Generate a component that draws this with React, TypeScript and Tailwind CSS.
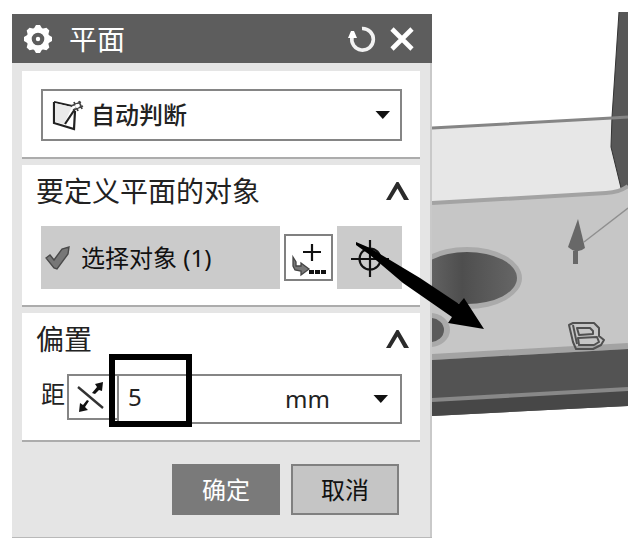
import type { ReactNode } from 'react'

const GearIcon = () => (
  <svg viewBox="0 0 30 30" className="h-[30px] w-[30px] shrink-0" aria-hidden="true">
    <g fill="#fff">
      {[0, 45, 90, 135, 180, 225, 270, 315].map((angle) => (
        <path key={angle} d="M10 6 L13 1 H17 L20 6 Z" transform={`rotate(${angle} 15 15)`} />
      ))}
    </g>
    <circle cx="15" cy="15" r="8.8" fill="none" stroke="#fff" strokeWidth="5" />
    <circle cx="15" cy="15" r="2.2" fill="#fff" />
  </svg>
)

const ResetIcon = () => (
  <svg viewBox="0 0 28 28" className="h-7 w-7" aria-hidden="true">
    <path d="M14 3.5 A10.8 10.8 0 1 1 4 12" fill="none" stroke="#f2f2f2" strokeWidth="3.6" />
    <path d="M0 13 L3 6 L6 6 L9 13 Z" fill="#fff" />
  </svg>
)

const CloseIcon = () => (
  <svg viewBox="0 0 24 24" className="h-6 w-6" aria-hidden="true">
    <path d="M2 2 L22 22 M22 2 L2 22" stroke="#fff" strokeWidth="4.6" />
  </svg>
)

const PlaneIcon = () => (
  <svg viewBox="0 0 32 32" className="h-8 w-8" aria-hidden="true">
    <path d="M2 3 L20 7 M23 12 L22 30 L2 24 L2 3" fill="none" stroke="#222" strokeWidth="2.2" />
    <path d="M3 4 L20 8 L12 25 L3 23 Z" fill="#eaeaea" />
    <path d="M13 25 L23 10" stroke="#222" strokeWidth="2.2" />
    <path d="M19 7 L29 3 M21 11 L31 7 M22 3 L26 12 M27 2 L30 10" stroke="#444" strokeWidth="1.8" />
    <circle cx="25" cy="7" r="2" fill="#fff" />
  </svg>
)

const CheckIcon = () => (
  <svg viewBox="0 0 26 26" className="h-[26px] w-[26px]" aria-hidden="true">
    <path d="M1 13 L5 10 L9 15 L17 4 L24 2 L23 9 L12 24 L9 23 Z" fill="#777" stroke="#4a4a4a" strokeWidth="1.4" />
  </svg>
)

const ChevronUp = () => (
  <svg viewBox="0 0 24 20" className="h-5 w-6" aria-hidden="true">
    <path d="M0 19 L10.5 1 H12.5 L23 19 H18 L11.5 7.5 L4.5 19 Z" fill="#2b2b2b" />
  </svg>
)

const Caret = () => (
  <svg viewBox="0 0 16 9" className="pointer-events-none absolute right-[11px] top-1/2 h-[9px] w-4 -translate-y-1/2" aria-hidden="true">
    <path d="M0.5 0.5 H15 L7.8 8.5 Z" fill="#111" />
  </svg>
)

const AddPointIcon = () => (
  <svg viewBox="0 0 44 42" className="h-[42px] w-11" aria-hidden="true">
    <path d="M25 7 V24 M16 15 H34" stroke="#111" strokeWidth="2.2" />
    <path d="M6 20 L9 25 L9 29 L14 29 V26 L22 32 L14 38 V34 L8 33 L6 29 Z" fill="#777" stroke="#444" strokeWidth="1.3" />
    <path d="M22 33 H27 V37 H22 Z M28 33 H33 V37 H28 Z M34 33 H39 V37 H34 Z" fill="#111" />
  </svg>
)

const CrosshairIcon = () => (
  <svg viewBox="0 0 40 40" className="h-10 w-10" aria-hidden="true">
    <circle cx="20" cy="21" r="10.5" fill="none" stroke="#111" strokeWidth="2.2" />
    <path d="M20 2 V39 M1 21 H39" stroke="#111" strokeWidth="2.2" />
  </svg>
)

const ReverseIcon = () => (
  <svg viewBox="0 0 32 32" className="h-8 w-8" aria-hidden="true">
    <path d="M4 6 L29 27" stroke="#333" strokeWidth="2.4" />
    <path d="M29 1 L28 10 L25 9 L21 13 L18 12 L23 6 L21 3 Z" fill="#111" />
    <path d="M5 31 L6 22 L9 24 L13 19 L15 20 L11 26 L14 29 Z" fill="#111" />
  </svg>
)

// Pointer from the pick button towards the target face
const PointerArrow = () => (
  <svg viewBox="356 241 130 90" className="pointer-events-none absolute left-[19px] top-[15px] z-10 h-[90px] w-[130px] max-w-none" aria-hidden="true">
    <path d="M356 242 L370 248 L420 278 L459 304 L464 298 L484 329 L448 323 L452 317 L403 283 L370 255 L356 245 Z" fill="#000" />
  </svg>
)

const ModelView = () => (
  <svg viewBox="432 12 196 406" className="block w-full" role="img" aria-label="3D">
    <defs>
      <linearGradient id="hole" x1="0" x2="1">
        <stop offset="0" stopColor="#6b6b6b" />
        <stop offset="0.45" stopColor="#4e4e4e" />
        <stop offset="1" stopColor="#666" />
      </linearGradient>
    </defs>
    <path d="M432 128 L628 117 V195 L432 204 Z" fill="#e7e7e7" />
    <path d="M619 12 H628 V190 L621 188 L611 147 L612 117 Z" fill="#575757" />
    <path d="M619 12 L612 117 L611 147 L621 188" fill="none" stroke="#333" strokeWidth="1" />
    <path d="M432 128 L612 118 L628 117" fill="none" stroke="#858585" strokeWidth="3" />
    <path d="M432 203 L606 193 Q620 192 628 186 V352 L432 362 Z" fill="#c6c6c6" />
    <path d="M432 203 L606 193 Q620 192 628 186" fill="none" stroke="#a3a3a3" strokeWidth="4" />

    <ellipse cx="467" cy="278" rx="55" ry="31" fill="#aaa" />
    <ellipse cx="467" cy="278" rx="50" ry="26" fill="url(#hole)" />
    <ellipse cx="430" cy="330" rx="20" ry="17" fill="#aaa" />
    <ellipse cx="430" cy="330" rx="14" ry="12" fill="#5b5b5b" />

    <path d="M432 357 L628 346" stroke="#a3a3a3" strokeWidth="6" />
    <path d="M432 360 L628 349 V406 L432 416 Z" fill="#535353" />
    <path d="M432 400 L628 389 V406 L432 416 Z" fill="#474747" />
    <path d="M432 400 L628 389" stroke="#888" strokeWidth="4" />

    <path d="M584 242 L628 208" stroke="#8f8f8f" strokeWidth="1.4" />
    <path d="M578 219 L585 248 Q577 255 568 247 Z" fill="#686868" />
    <path d="M573 251 H578 V264 H573 Z" fill="#686868" />

    <g fill="none" stroke="#505050" strokeWidth="2" strokeLinejoin="round">
      <path d="M569 325 L573 323 H594 L599 328 V336 L604 340 L601 345 L593 349 H576 L573 342 Z" />
      <path d="M577 328 H590 L593 331 V334 L579 335 Z" />
      <path d="M578 338 L597 337 L599 342 L594 345 H579 Z" />
      <path d="M573 325 L577 344" />
    </g>
  </svg>
)

const Panel = ({ title, children }: { title: string; children: ReactNode }) => (
  <section className="border-b-2 border-[#acacac] bg-white pb-4 pt-2">
    <div className="flex items-center justify-between pl-[14px] pr-[10px]">
      <h2 className="text-[28px] leading-9">{title}</h2>
      <button type="button" aria-label={`收起 ${title}`}>
        <ChevronUp />
      </button>
    </div>
    <div className="mt-[17px] pl-[19px] pr-[18px]">{children}</div>
  </section>
)

const App = () => {
  return (
    <main className="min-h-screen bg-white px-3 py-3 font-['Noto_Sans','Noto_Sans_CJK_SC',sans-serif] text-[#222]">
      <div className="grid grid-cols-[15fr_7fr] items-start">
        <form className="relative z-10 mt-[2px] border-b border-[#b9b9b9] bg-[#e5e5e5]">
          <header className="flex h-[49px] items-center bg-[#5d5d5d] pl-[11px] pr-[18px] text-white">
            <GearIcon />
            <h1 className="ml-4 flex-1 text-[28px] leading-9">平面</h1>
            <div className="flex items-center gap-[14px]">
              <button type="button" aria-label="重置">
                <ResetIcon />
              </button>
              <button type="button" aria-label="关闭">
                <CloseIcon />
              </button>
            </div>
          </header>

          <div className="flex flex-col gap-[6px] border-r-2 border-[#c9c9c9] pl-[10px] pr-[10px] pt-2">
            <section className="border-b-2 border-[#acacac] bg-white pb-4 pl-[19px] pr-[18px] pt-[18px]">
              <div className="relative flex items-center">
                <span className="pointer-events-none absolute left-[11px]">
                  <PlaneIcon />
                </span>
                <select
                  aria-label="类型"
                  className="h-[52px] w-full appearance-none border-2 border-[#858585] bg-white pl-12 text-2xl font-medium"
                >
                  <option>自动判断</option>
                </select>
                <Caret />
              </div>
            </section>

            <Panel title="要定义平面的对象">
              <div className="flex items-center gap-1">
                <button type="button" className="flex h-[63px] flex-1 items-center gap-[10px] bg-[#cbcbcb] pl-1 text-2xl text-[#111]">
                  <CheckIcon />
                  选择对象 (1)
                </button>
                <button type="button" aria-label="添加点" className="flex h-[47px] w-[49px] items-center justify-center border-2 border-[#808080] bg-white">
                  <AddPointIcon />
                </button>
                <button type="button" aria-label="指定点" className="relative flex h-[63px] w-[65px] items-center justify-center bg-[#cbcbcb]">
                  <CrosshairIcon />
                  <PointerArrow />
                </button>
              </div>
            </Panel>

            <Panel title="偏置">
              <div className="flex items-start">
                <label htmlFor="distance" className="w-[26px] overflow-hidden text-2xl leading-10">
                  距
                </label>
                <button type="button" aria-label="反向" className="flex h-[46px] w-[50px] items-center justify-start border-2 border-r-0 border-[#858585] pl-[5px]">
                  <ReverseIcon />
                </button>
                <div className="relative flex h-[50px] flex-1 border-2 border-[#858585]">
                  <input id="distance" defaultValue="5" className="w-0 flex-1 pb-1 pl-[9px] text-2xl outline-none" />
                  <select aria-label="单位" className="w-[115px] appearance-none bg-white text-2xl">
                    <option>mm</option>
                  </select>
                  <Caret />
                  <span className="pointer-events-none absolute -left-[10px] -top-[22px] h-[73px] w-[83px] border-[6px] border-black" />
                </div>
              </div>
            </Panel>

            <footer className="flex justify-end gap-[11px] pb-[22px] pr-[21px] pt-4">
              <button type="submit" className="h-[51px] w-[108px] bg-[#7a7a7a] text-2xl text-white">
                确定
              </button>
              <button type="button" className="h-[51px] w-[108px] border-2 border-[#808080] bg-[#c5c5c5] text-2xl text-[#111]">
                取消
              </button>
            </footer>
          </div>
        </form>

        <ModelView />
      </div>
    </main>
  )
}

export default App
